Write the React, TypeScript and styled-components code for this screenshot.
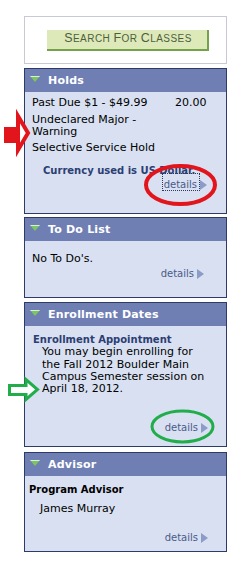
import React from 'react';
import styled, { createGlobalStyle } from 'styled-components';

const Global = createGlobalStyle`
  html, body { margin: 0; padding: 0; background: #ffffff; }
  body { font-family: "DejaVu Sans", Verdana, sans-serif; color: #000; }
`;

const Page = styled.div`
  position: relative;
  width: 250px;
  height: 575px;
  box-sizing: border-box;
  padding: 16px 0 0 24px;
  display: flex;
  flex-direction: column;
  overflow: hidden;
`;

const SearchBox = styled.div`
  width: 203px;
  height: 48px;
  box-sizing: border-box;
  border: 1px solid #c7cad6;
  padding: 13px 0 0 22px;
`;

const SearchButton = styled.button`
  width: 162px;
  height: 21px;
  box-sizing: border-box;
  padding: 1px 0 0 2px;
  background: #dde9b9;
  border: none;
  border-right: 2px solid #76a14b;
  border-bottom: 2px solid #76a14b;
  font-family: "Liberation Sans", Arial, sans-serif;
  font-size: 10px;
  letter-spacing: 0.45px;
  text-transform: uppercase;
  color: #4d5f3d;
  display: flex;
  align-items: baseline;
  justify-content: center;
  white-space: pre;
`;

const Initial = styled.span`
  font-size: 12.5px;
`;

const Panel = styled.section<{ $mt: number; $h: number }>`
  margin-top: ${(p) => p.$mt}px;
  width: 203px;
  height: ${(p) => p.$h}px;
  box-sizing: border-box;
  border: 1px solid #2d3b68;
  background: #d8e0f1;
  display: flex;
  flex-direction: column;
`;

const Header = styled.header`
  height: 23px;
  flex: none;
  background: #6f7fb4;
  display: flex;
  align-items: center;
  gap: 8px;
  padding-left: 5px;
  color: #ffffff;
  font-size: 11px;
  font-weight: bold;
  letter-spacing: 0.2px;
  line-height: 23px;
`;

const HeaderTriangle = styled.svg`
  width: 10px;
  height: 6px;
  margin-top: -3px;
  flex: none;
`;

const Body = styled.div<{ $pt: number; $pb: number }>`
  flex: 1;
  display: flex;
  flex-direction: column;
  padding: ${(p) => p.$pt}px 0 ${(p) => p.$pb}px 0;
  font-size: 11px;
  line-height: 12.3px;
`;

const HoldsTable = styled.div`
  display: grid;
  grid-template-columns: 143px auto;
  row-gap: 4.5px;
  padding-left: 7px;
  line-height: 12px;
`;

const Text = styled.div<{ $pl: number; $pr?: number; $mt?: number }>`
  padding-left: ${(p) => p.$pl}px;
  padding-right: ${(p) => p.$pr ?? 0}px;
  margin-top: ${(p) => p.$mt ?? 0}px;
`;

const BoldText = styled.div<{ $pl: number; $mt?: number; $navy?: boolean }>`
  padding-left: ${(p) => p.$pl}px;
  margin-top: ${(p) => p.$mt ?? 0}px;
  font-size: 10px;
  font-weight: bold;
  color: ${(p) => (p.$navy ? '#2d3e73' : '#000000')};
`;

const DetailsRow = styled.div<{ $pr: number }>`
  margin-top: auto;
  height: 12px;
  display: flex;
  justify-content: flex-end;
  align-items: center;
  gap: 3px;
  padding-right: ${(p) => p.$pr}px;
`;

const DetailsLink = styled.a<{ $focused?: boolean }>`
  position: relative;
  font-size: 10px;
  line-height: 12px;
  color: #4a5a8a;
  text-decoration: none;
  &::after {
    content: '';
    display: ${(p) => (p.$focused ? 'block' : 'none')};
    position: absolute;
    left: -2px;
    right: -3px;
    top: -6px;
    bottom: 0px;
    border: 1px dotted #30385a;
  }
`;

const DetailsArrow = styled.svg`
  width: 7px;
  height: 10px;
  flex: none;
`;

const Annotation = styled.svg<{ $x: number; $y: number }>`
  position: absolute;
  left: ${(p) => p.$x}px;
  top: ${(p) => p.$y}px;
  overflow: visible;
`;

function Triangle() {
  return (
    <HeaderTriangle viewBox="0 0 10 6">
      <polygon points="0,0 10,0 5,6" fill="#7cc567" />
      <polyline points="0.5,0.5 9.5,0.5" stroke="#d6f2c8" strokeWidth="1" />
    </HeaderTriangle>
  );
}

function Details({ pr, focused }: { pr: number; focused?: boolean }) {
  return (
    <DetailsRow $pr={pr}>
      <DetailsLink href="#" $focused={focused}>details</DetailsLink>
      <DetailsArrow viewBox="0 0 7 10">
        <polygon points="0,0 7,5 0,10" fill="#8b9cc9" />
      </DetailsArrow>
    </DetailsRow>
  );
}

function PanelHeader({ title }: { title: string }) {
  return (
    <Header>
      <Triangle />
      <span>{title}</span>
    </Header>
  );
}

export default function App() {
  return (
    <>
      <Global />
      <Page>
        <SearchBox>
          <SearchButton>
            <Initial>S</Initial>earch <Initial>F</Initial>or <Initial>C</Initial>lasses
          </SearchButton>
        </SearchBox>

        <Panel $mt={4} $h={146}>
          <PanelHeader title="Holds" />
          <Body $pt={5} $pb={22}>
            <HoldsTable>
              <span>Past Due $1 - $49.99</span>
              <span>20.00</span>
              <span>Undeclared Major - Warning</span>
              <span />
              <span>Selective Service Hold</span>
              <span />
            </HoldsTable>
            <BoldText $pl={18} $mt={11} $navy>Currency used is US Dollar.</BoldText>
            <Details pr={19} focused />
          </Body>
        </Panel>

        <Panel $mt={3} $h={81}>
          <PanelHeader title="To Do List" />
          <Body $pt={12} $pb={17}>
            <Text $pl={7}>No To Do's.</Text>
            <Details pr={22} />
          </Body>
        </Panel>

        <Panel $mt={4} $h={145}>
          <PanelHeader title="Enrollment Dates" />
          <Body $pt={8} $pb={12}>
            <BoldText $pl={8} $navy>Enrollment Appointment</BoldText>
            <Text $pl={17} $pr={12}>
              You may begin enrolling for the Fall 2012 Boulder Main Campus Semester session on April 18, 2012.
            </Text>
            <Details pr={18} />
          </Body>
        </Panel>

        <Panel $mt={5} $h={100}>
          <PanelHeader title="Advisor" />
          <Body $pt={8} $pb={7}>
            <BoldText $pl={4}>Program Advisor</BoldText>
            <Text $pl={15} $mt={7}>James Murray</Text>
            <Details pr={18} />
          </Body>
        </Panel>

        <Annotation $x={0} $y={110} width="34" height="46" viewBox="0 0 34 46">
          <polygon points="18,6 28,23 18,40" fill="#ffffff" stroke="#e3151c" strokeWidth="4" strokeLinejoin="miter" />
          <rect x="4" y="17" width="16" height="16" fill="#e3151c" />
        </Annotation>
        <Annotation $x={144} $y={164} width="74" height="42" viewBox="0 0 74 42">
          <ellipse cx="36.5" cy="21" rx="34.5" ry="19" fill="none" stroke="#e3151c" strokeWidth="4" />
        </Annotation>
        <Annotation $x={0} $y={370} width="45" height="35" viewBox="0 0 45 35">
          <polygon
            points="9.5,15.5 26,15.5 26,9.5 37.5,19.5 26,29.5 26,24.5 9.5,24.5"
            fill="#ffffff"
            stroke="#22ad4b"
            strokeWidth="3"
          />
        </Annotation>
        <Annotation $x={150} $y={409} width="66" height="36" viewBox="0 0 66 36">
          <ellipse cx="32.5" cy="17.5" rx="30.5" ry="15.5" fill="none" stroke="#22ad4b" strokeWidth="3" />
        </Annotation>
      </Page>
    </>
  );
}
